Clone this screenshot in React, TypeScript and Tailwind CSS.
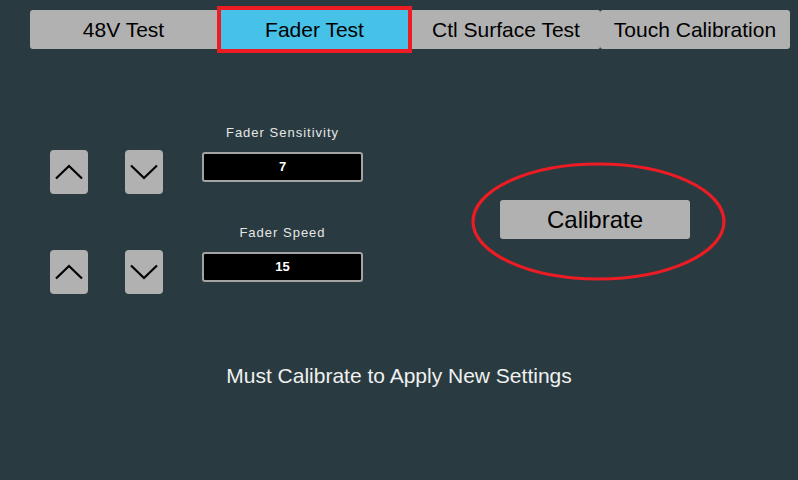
import { useState } from 'react';

const tabs = ['48V Test', 'Fader Test', 'Ctl Surface Test', 'Touch Calibration'];

function Chevron({ up }: { up?: boolean }) {
  return (
    <svg width="28" height="16" viewBox="0 0 28 16" fill="none">
      <polyline
        points={up ? '1,14.5 14,2 27,14.5' : '1,1.5 14,14 27,1.5'}
        stroke="#000"
        strokeWidth="2.2"
        strokeLinejoin="miter"
      />
    </svg>
  );
}

function ArrowBtn({ up, onClick }: { up?: boolean; onClick: () => void }) {
  return (
    <button
      onClick={onClick}
      className="w-[38px] h-[44px] rounded-[4px] bg-[#b1b1b1] flex items-center justify-center"
    >
      <Chevron up={up} />
    </button>
  );
}

function Setting({ label, value, setValue }: { label: string; value: number; setValue: (v: number) => void }) {
  return (
    <div className="flex items-start">
      <div className="mt-[25px] flex gap-[37px]">
        <ArrowBtn up onClick={() => setValue(value + 1)} />
        <ArrowBtn onClick={() => setValue(Math.max(0, value - 1))} />
      </div>
      <div className="ml-[39px] flex flex-col items-center">
        <div className="h-[16px] leading-[16px] text-[13px] tracking-[1px] text-[#e6e6e6]">{label}</div>
        <div className="mt-[11px] w-[161px] h-[30px] rounded-[3px] border-2 border-[#a3a3a3] bg-black flex items-center justify-center text-[13px] font-bold text-white">
          {value}
        </div>
      </div>
    </div>
  );
}

export default function App() {
  const [sens, setSens] = useState(7);
  const [speed, setSpeed] = useState(15);

  return (
    <div
      className="w-[798px] h-[480px] bg-[#293b40] overflow-hidden flex flex-col"
      style={{ fontFamily: '"Liberation Sans", Arial, sans-serif' }}
    >
      {/* Tabs */}
      <div className="ml-[30px] mt-[6px] flex items-center h-[47px]">
        <div className="w-[187px] h-[39px] rounded-l-[3px] bg-[#b1b1b1] flex items-center justify-center text-[21px] text-black">
          {tabs[0]}
        </div>
        <div className="w-[195px] h-[47px] border-[4px] border-[#ed1c24] bg-[#46c1e7] flex items-center justify-center text-[21px] text-black">
          {tabs[1]}
        </div>
        <div className="w-[188px] h-[39px] rounded-r-[2px] bg-[#b1b1b1] flex items-center justify-center text-[21px] text-black">
          {tabs[2]}
        </div>
        <div className="w-[190px] h-[39px] rounded-[3px] bg-[#b1b1b1] flex items-center justify-center text-[21px] text-black">
          {tabs[3]}
        </div>
      </div>

      {/* Controls */}
      <div className="mt-[72px] flex">
        <div className="ml-[50px] flex flex-col gap-[31px]">
          <Setting label="Fader Sensitivity" value={sens} setValue={setSens} />
          <Setting label="Fader Speed" value={speed} setValue={setSpeed} />
        </div>
        <div className="relative ml-[137px] mt-[75px] h-fit">
          <button className="w-[190px] h-[39px] rounded-[3px] bg-[#b1b1b1] text-[24px] text-black flex items-center justify-center">
            Calibrate
          </button>
          {/* red annotation ring */}
          <svg
            className="absolute left-[-30px] top-[-39px] pointer-events-none"
            width="258"
            height="124"
            viewBox="0 0 258 124"
          >
            <ellipse cx="128.5" cy="60.5" rx="125.5" ry="57.5" fill="none" stroke="#ed1c24" strokeWidth="3.2" />
          </svg>
        </div>
      </div>

      <div className="mt-[66px] text-center text-[21px] text-[#f0f0f0]">Must Calibrate to Apply New Settings</div>
    </div>
  );
}
